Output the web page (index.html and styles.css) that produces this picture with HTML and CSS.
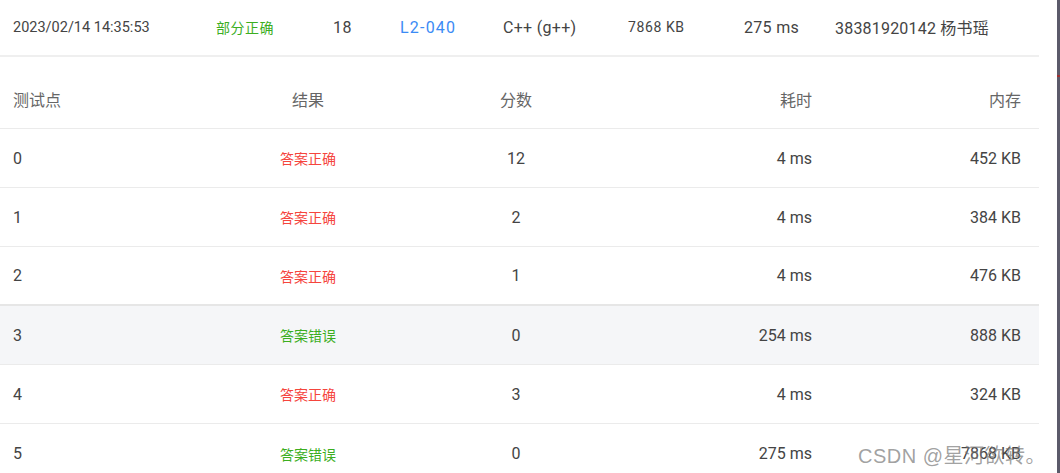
FILE: index.html
```html
<!DOCTYPE html>
<html lang="zh">
<head>
<meta charset="utf-8">
<link rel="stylesheet" href="styles.css">
</head>
<body>
<div class="page">
  <div class="main">
    <div class="summary">
      <span class="s-date">2023/02/14 14:35:53</span>
      <span class="s-status">部分正确</span>
      <span class="s-score">18</span>
      <span class="s-prob">L2-040</span>
      <span class="s-lang">C++ (g++)</span>
      <span class="s-mem">7868 KB</span>
      <span class="s-time">275 ms</span>
      <span class="s-user">38381920142 杨书瑶</span>
    </div>
    <div class="table">
      <div class="row head">
        <div class="c1">测试点</div><div class="c2">结果</div><div class="c3">分数</div><div class="c4">耗时</div><div class="c5">内存</div>
      </div>
      <div class="row">
        <div class="c1">0</div><div class="c2 ok">答案正确</div><div class="c3">12</div><div class="c4">4 ms</div><div class="c5">452 KB</div>
      </div>
      <div class="row">
        <div class="c1">1</div><div class="c2 ok">答案正确</div><div class="c3">2</div><div class="c4">4 ms</div><div class="c5">384 KB</div>
      </div>
      <div class="row thick">
        <div class="c1">2</div><div class="c2 ok">答案正确</div><div class="c3">1</div><div class="c4">4 ms</div><div class="c5">476 KB</div>
      </div>
      <div class="row hover">
        <div class="c1">3</div><div class="c2 wa">答案错误</div><div class="c3">0</div><div class="c4">254 ms</div><div class="c5">888 KB</div>
      </div>
      <div class="row">
        <div class="c1">4</div><div class="c2 ok">答案正确</div><div class="c3">3</div><div class="c4">4 ms</div><div class="c5">324 KB</div>
      </div>
      <div class="row last">
        <div class="c1">5</div><div class="c2 wa">答案错误</div><div class="c3">0</div><div class="c4">275 ms</div><div class="c5">7868 KB</div>
      </div>
    </div>
  </div>
  <div class="gutter"></div>
  <div class="edge"><span class="edge-mark"></span></div>
  <div class="watermark">CSDN @星河欲转。</div>
</div>
</body>
</html>
```

FILE: styles.css
```css
* { box-sizing: border-box; }
html, body { margin: 0; padding: 0; background: #fff; }
body {
  font-family: Roboto, "Noto Sans", "Noto Sans CJK SC", sans-serif;
  color: #444;
  width: 1060px;
  height: 473px;
  overflow: hidden;
}
.page {
  position: relative;
  display: flex;
  width: 1060px;
  height: 473px;
}
.main { width: 1039px; flex: none; }
.gutter { width: 18px; flex: none; background: #fff; }
.edge {
  width: 3px;
  flex: none;
  background: #5b5a6a;
  position: relative;
}
.edge-mark {
  position: absolute;
  left: 0;
  top: 75px;
  width: 3px;
  height: 2px;
  background: #a03030;
}

.summary {
  height: 57px;
  display: flex;
  align-items: center;
  border-bottom: 2px solid #efefef;
  padding-left: 13px;
  padding-bottom: 1px;
  white-space: nowrap;
}
.summary span { display: block; }
.s-date { font-size: 14.5px; color: #444; width: 203px; }
.s-status { font-size: 14px; color: #3cae1f; width: 117px; letter-spacing: 0.5px; }
.s-score { font-size: 16px; color: #444; width: 67px; letter-spacing: 0.5px; }
.s-prob { font-size: 16px; color: #3b8bf5; width: 103px; letter-spacing: 1.2px; }
.s-lang { font-size: 16px; color: #444; width: 125px; letter-spacing: 0.3px; }
.s-mem { font-size: 14px; color: #444; width: 116px; letter-spacing: 0.6px; }
.s-time { font-size: 16px; color: #444; width: 91px; letter-spacing: 0.3px; }
.s-user { font-size: 16px; color: #444; letter-spacing: 0.2px; }

.table { display: flex; flex-direction: column; }
.row {
  display: grid;
  grid-template-columns: 208px 200px 216px 206px 209px;
  height: 59px;
  align-items: center;
  border-bottom: 1px solid #ebebeb;
  font-size: 16px;
  color: #444;
}
.row.head { height: 72px; padding-top: 12px; color: #666; font-size: 16px; }
.row.thick { border-bottom: 2px solid #e6e6e6; }
.row.hover { background: #f5f6f8; }
.row.last { border-bottom: none; }
.c1 { padding-left: 13px; }
.c2 { text-align: center; font-size: 14px; }
.head .c2 { font-size: 16px; }
.c3 { text-align: center; }
.c4 { text-align: right; padding-right: 18px; }
.c5 { text-align: right; padding-right: 18px; }
.ok { color: #f5453d; }
.wa { color: #3cae1f; }

.watermark {
  position: absolute;
  left: 858px;
  top: 440px;
  font-size: 20px;
  color: rgba(120, 120, 120, 0.7);
  font-family: "Liberation Sans", "Noto Sans CJK SC", sans-serif;
  white-space: nowrap;
  letter-spacing: 0.5px;
}
```
